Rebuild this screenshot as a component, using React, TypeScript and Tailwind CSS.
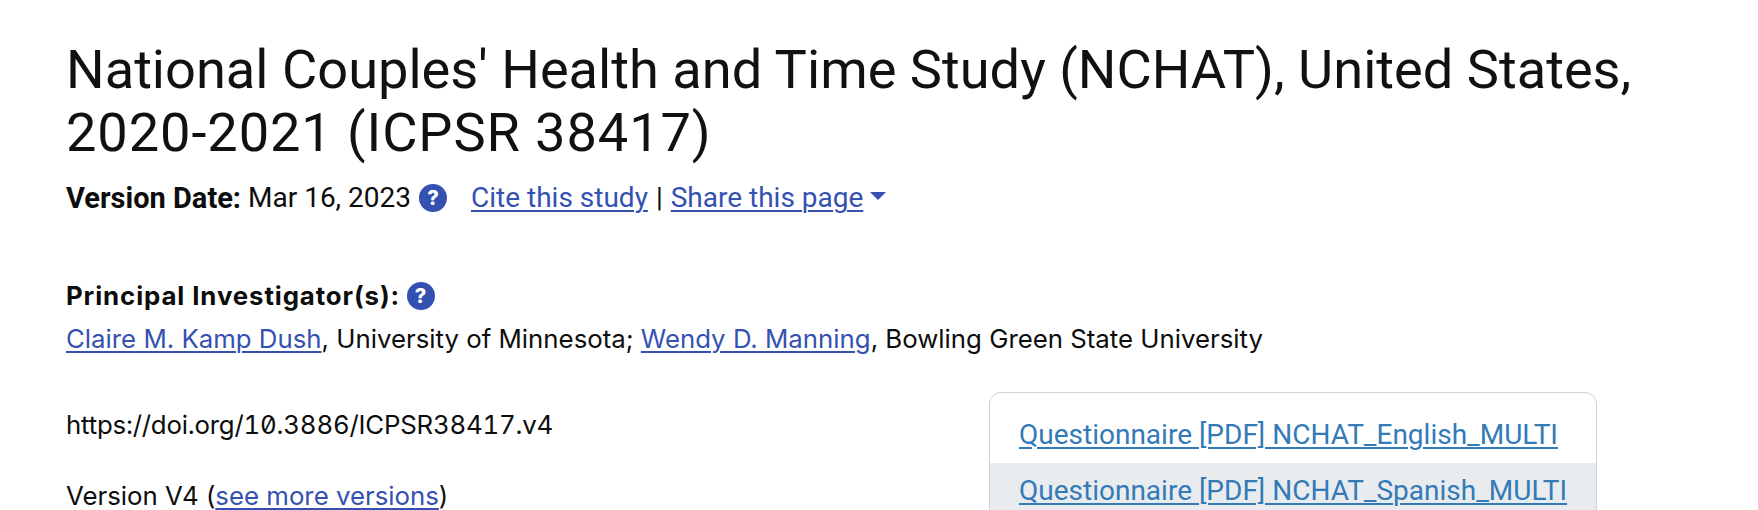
import React from "react";

function Help({ className = "" }: { className?: string }) {
  return (
    <span className={`inline-flex h-[28px] w-[28px] items-center justify-center rounded-full bg-[#3451b2] align-middle font-['Inter',sans-serif] text-[20px] font-extrabold leading-none text-white ${className}`}>
      ?
    </span>
  );
}

const link = "text-[#3451b2] underline decoration-[1.5px] underline-offset-[3px]";
const panelLink = "whitespace-nowrap text-[#337ab7] underline decoration-[1.5px] underline-offset-[3px]";

export default function App() {
  return (
    <div className="h-[510px] w-[1758px] overflow-hidden bg-white pl-[66px] pt-[38px] font-['Inter',sans-serif] text-[25.8px] leading-[36px] text-[#0d0d0d]">
      <h1 className="w-[1650px] font-['Roboto',sans-serif] text-[54.2px] font-[450] leading-[63px] text-[#111111]">
        National Couples' Health and Time Study (NCHAT), United States,
        <br />
        <span className="tracking-[0.9px]">2020-2021 (ICPSR 38417)</span>
      </h1>
      <div className="mt-[16px] flex h-[36px] items-center font-['Roboto',sans-serif] text-[28px] slashed-zero">
        <strong className="text-[29px] font-bold">Version Date:</strong>
        <span className="ml-[7px]">Mar 16, 2023</span>
        <Help className="ml-[8px]" />
        <a className={`ml-[24px] ${link}`}>Cite this study</a>
        <span className="ml-[8px]">|</span>
        <a className={`ml-[8px] ${link}`}>Share this page</a>
        <span className="ml-[7px] mb-[4px] h-0 w-0 border-x-[8px] border-t-[8px] border-x-transparent border-t-[#3451b2]" />
      </div>
      <div className="mt-[62px] flex h-[36px] items-center font-bold tracking-[0.9px]">
        <span>Principal Investigator(s):</span>
        <Help className="ml-[7px]" />
      </div>
      <p className="mt-[7px]">
        <a className={link}>Claire M. Kamp Dush</a>, University of Minnesota; <a className={link}>Wendy D. Manning</a>, Bowling Green State University
      </p>
      <div className="mt-[35px] flex">
        <div className="w-[923px]">
          <p className="mt-[15px] tracking-[-0.2px] tabular-nums slashed-zero">https://doi.org/10.3886/ICPSR38417.v4</p>
          <p className="mt-[35px]">
            Version V4 (<a className={link}>see more versions</a>)
          </p>
        </div>
        <div className="h-[200px] w-[608px] rounded-[12px] border border-[#d4d4d4] font-['Roboto',sans-serif] text-[28px]">
          <div className="flex h-[70px] items-center px-[29px] pt-[13px]">
            <a className={panelLink}>Questionnaire [PDF] NCHAT_English_MULTI</a>
          </div>
          <div className="flex h-[56px] items-center bg-[#e9ecef] px-[29px]">
            <a className={panelLink}>Questionnaire [PDF] NCHAT_Spanish_MULTI</a>
          </div>
        </div>
      </div>
    </div>
  );
}
